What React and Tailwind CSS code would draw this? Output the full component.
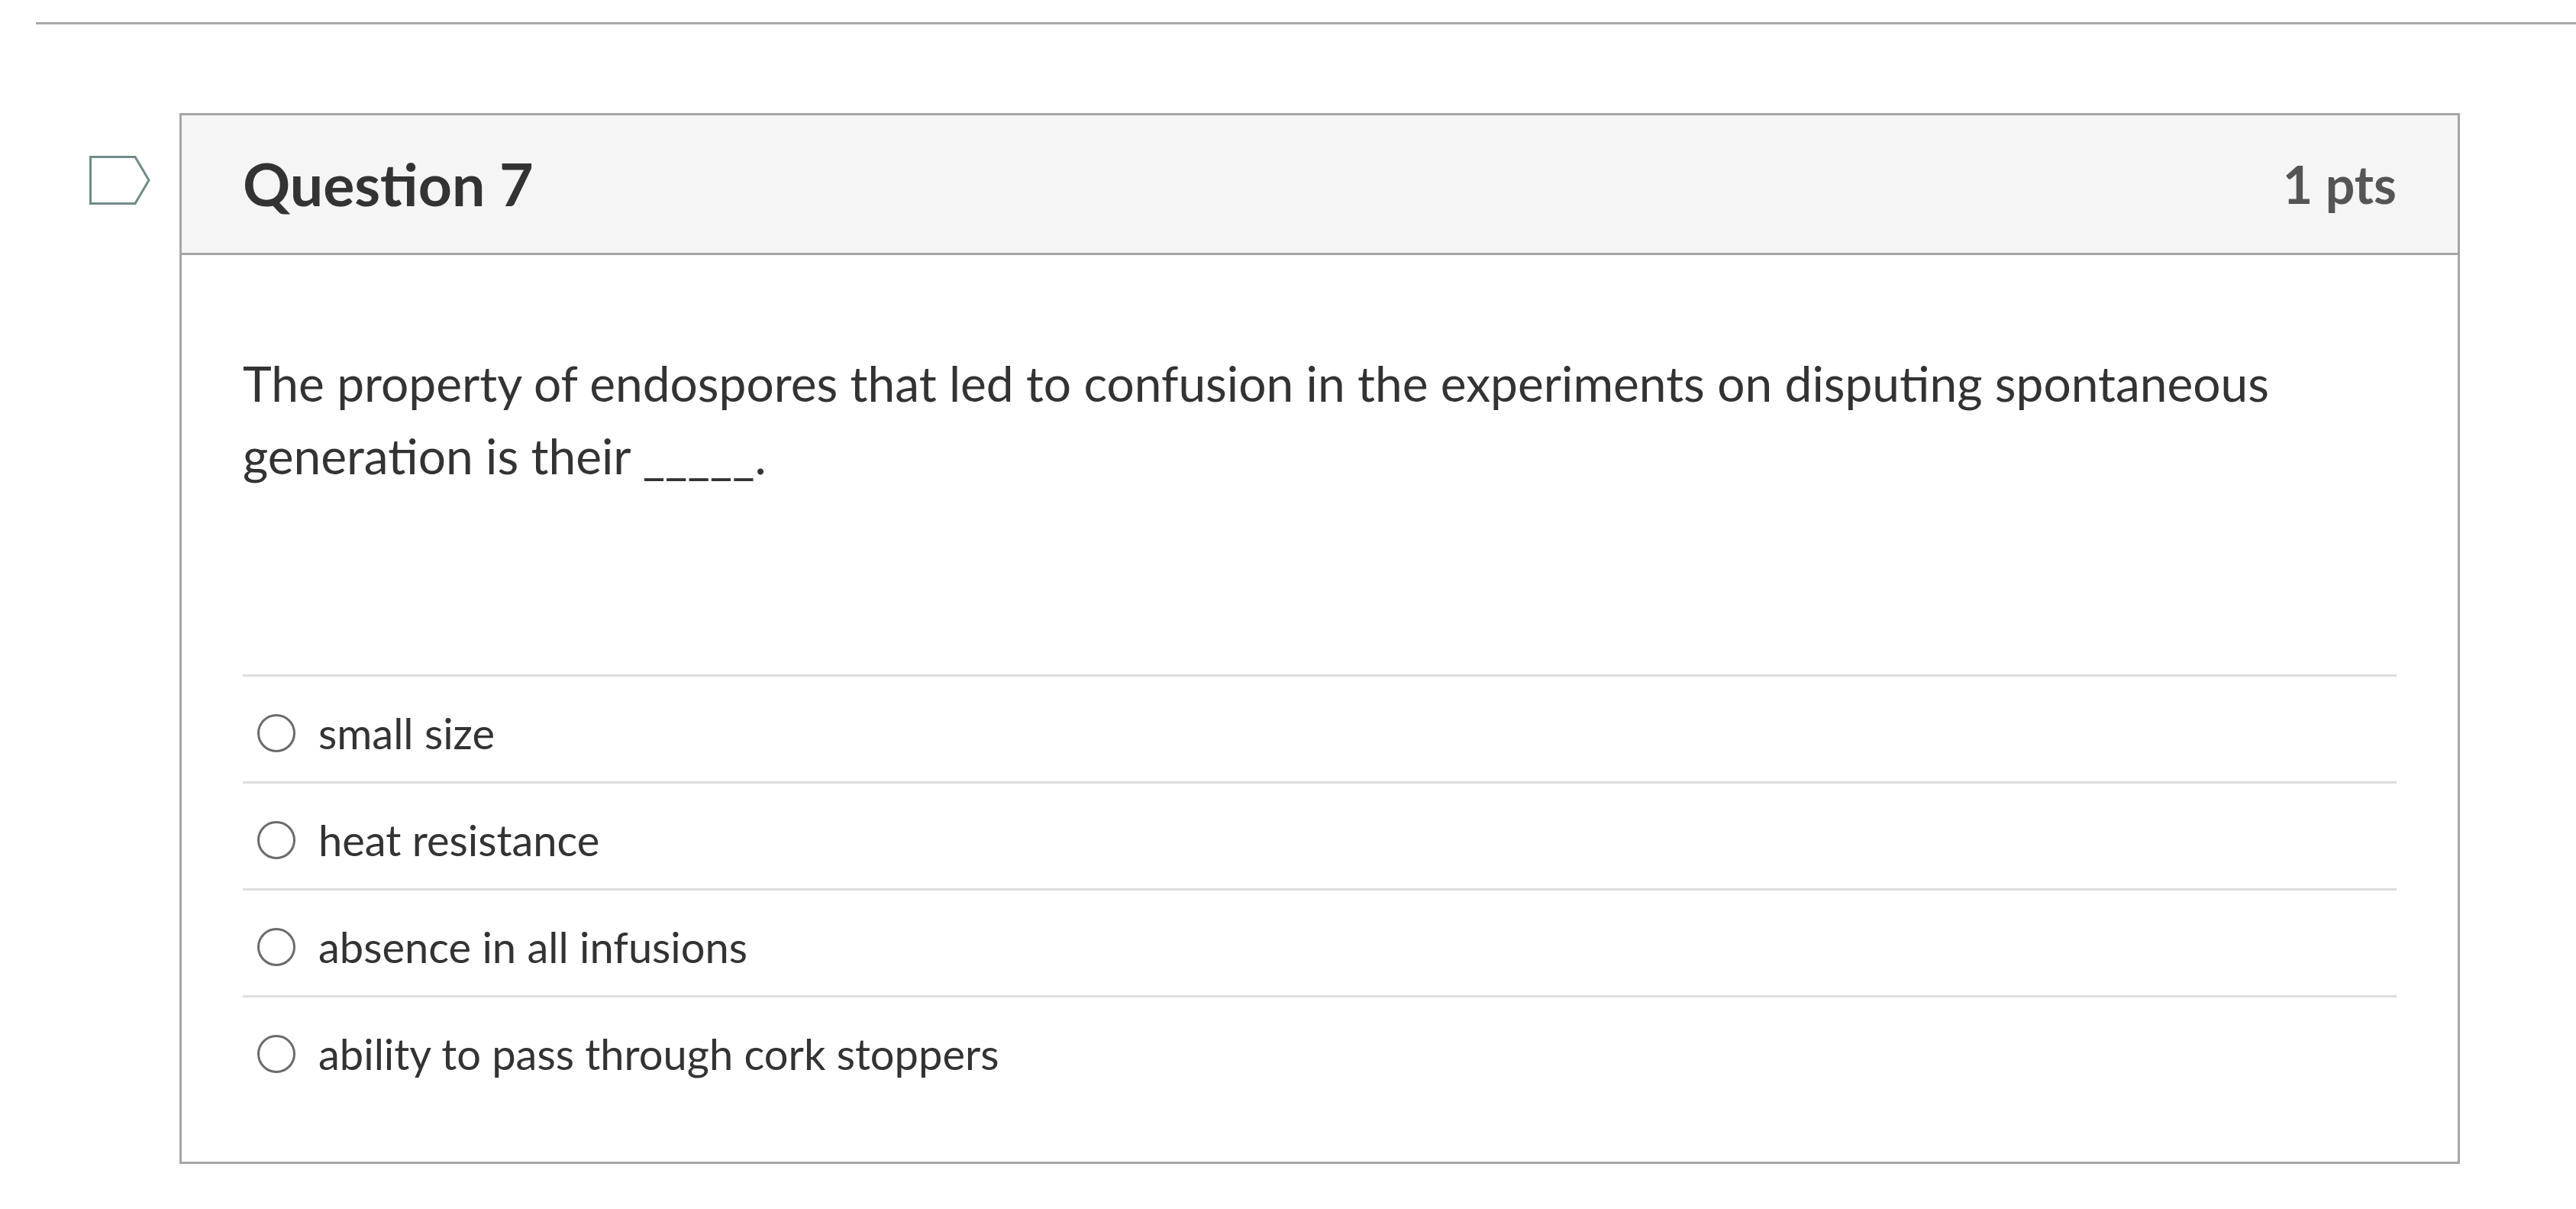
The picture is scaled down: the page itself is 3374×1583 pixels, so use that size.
const options = [
  "small size",
  "heat resistance",
  "absence in all infusions",
  "ability to pass through cork stoppers",
];

function FlagIcon() {
  return (
    <svg width="80" height="64" viewBox="0 0 80 64" fill="none">
      <path
        d="M1.5 1.5 H60 L78 32 L60 62.5 H1.5 Z"
        stroke="#708a8a"
        strokeWidth="3"
        strokeLinejoin="miter"
      />
    </svg>
  );
}

function Option({ label }) {
  return (
    <div className="border-t-[3px] border-[#dedede] h-[140px] pt-[10px] flex items-center">
      <span className="ml-[19px] w-[50px] h-[50px] rounded-full border-[3px] border-[#6b6b6b] bg-white shrink-0"></span>
      <span className="ml-[30px] text-[56px] text-[#333333]">{label}</span>
    </div>
  );
}

export default function App() {
  return (
    <div className="min-h-screen bg-white pt-[29px] font-[Lato,sans-serif]">
      <div className="ml-[47px] h-[3px] bg-[#a8a8a8]"></div>

      <div className="flex mt-[116px]">
        <div className="w-[235px] shrink-0 pl-[117px] pt-[56px]">
          <FlagIcon />
        </div>

        <div className="w-[2987px] border-[3px] border-[#a6a6a6]">
          <div className="h-[183px] bg-[#f5f5f5] border-b-[3px] border-[#a6a6a6] flex items-center justify-between px-[80px]">
            <h2 className="text-[77px] font-bold text-[#333333]">Question 7</h2>
            <span className="text-[68px] font-bold text-[#555555]">1 pts</span>
          </div>

          <div className="px-[80px] pt-[120px] pb-[78px]">
            <p className="text-[64px] leading-[95px] text-[#333333]">
              The property of endospores that led to confusion in the experiments on disputing spontaneous
              <br />
              generation is their _____.
            </p>

            <div className="mt-[239px]">
              {options.map((o) => (
                <Option key={o} label={o} />
              ))}
            </div>
          </div>
        </div>
      </div>
    </div>
  );
}
